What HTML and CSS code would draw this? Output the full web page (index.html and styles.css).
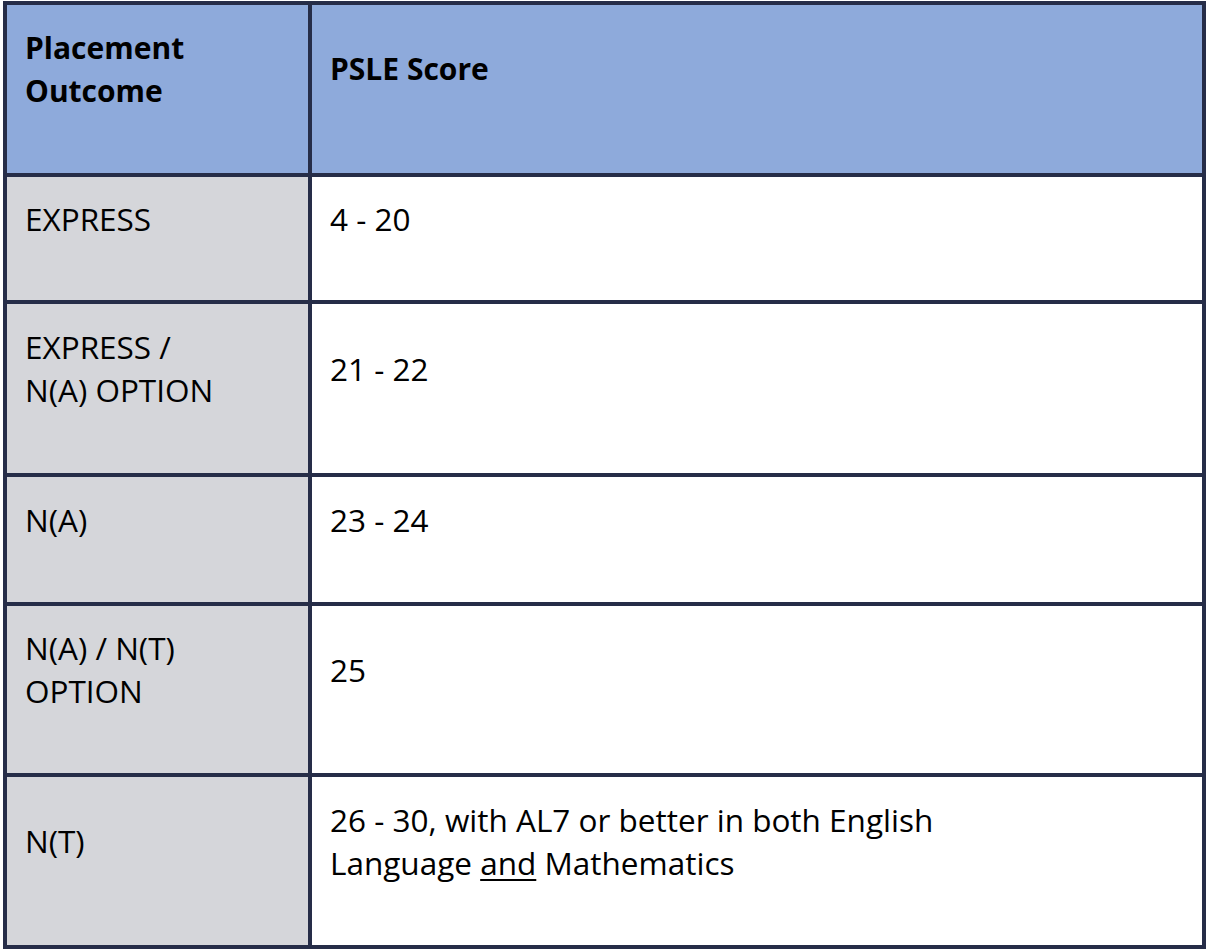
FILE: index.html
```html
<!DOCTYPE html>
<html lang="en">
<head>
<meta charset="utf-8">
<title>PSLE Score Placement</title>
<link rel="stylesheet" href="styles.css">
</head>
<body>
<div class="table">
  <div class="cell head"><p class="txt">Placement<br>Outcome</p></div>
  <div class="cell head"><p class="txt">PSLE Score</p></div>

  <div class="cell label"><p class="txt">EXPRESS</p></div>
  <div class="cell value"><p class="txt">4 - 20</p></div>

  <div class="cell label"><p class="txt">EXPRESS /<br>N(A) OPTION</p></div>
  <div class="cell value"><p class="txt">21 - 22</p></div>

  <div class="cell label"><p class="txt">N(A)</p></div>
  <div class="cell value"><p class="txt">23 - 24</p></div>

  <div class="cell label"><p class="txt">N(A) / N(T)<br>OPTION</p></div>
  <div class="cell value"><p class="txt">25</p></div>

  <div class="cell label"><p class="txt">N(T)</p></div>
  <div class="cell value"><p class="txt">26 - 30, with AL7 or better in both English<br>Language <span class="u">and</span> Mathematics</p></div>
</div>
</body>
</html>
```

FILE: styles.css
```css
html, body {
  margin: 0;
  padding: 0;
  background: #ffffff;
}

.table {
  margin: 1px 0 0 3px;
  width: 1203px;
  display: grid;
  grid-template-columns: 301px 890px;
  grid-template-rows: 168px 123px 169px 125px 167px 168px;
  gap: 4px;
  padding: 4px;
  box-sizing: border-box;
  background: #262d48;
  font-family: "Open Sans", "Liberation Sans", sans-serif;
  font-size: 31.5px;
  line-height: 43px;
  color: #000000;
}

.cell {
  display: flex;
  align-items: center;
  padding: 20px 18px 61px 18px;
  box-sizing: border-box;
}

.txt {
  margin: 0;
}

.head {
  background: #8eaadb;
  font-weight: 700;
  font-size: 30px;
}

.label {
  background: #d5d6da;
}

.value {
  background: #ffffff;
}

.u {
  text-decoration: underline;
  text-underline-offset: 4px;
  text-decoration-thickness: 2px;
}
```
